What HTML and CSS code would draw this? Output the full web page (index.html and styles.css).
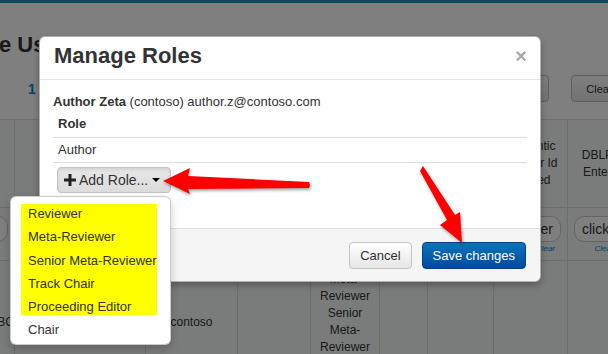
FILE: index.html
```html
<!DOCTYPE html>
<html lang="en">
<head>
    <meta charset="UTF-8">
    <meta name="viewport" content="width=device-width, initial-scale=1.0">
    <title>Manage Users</title>
    <link rel="stylesheet" href="styles.css">
</head>
<body>
    <div class="topbar"></div>
    <div class="page">
        <h1 class="page-title">e Users</h1>
        <div class="toolbar">
            <a class="count" href="#">1</a>
            <div class="toolbar-buttons">
                <button class="btn-page">Export Users</button>
                <button class="btn-page">Clear Filters</button>
            </div>
        </div>
        <table class="users">
            <colgroup>
                <col style="width: 80px">
                <col style="width: 131px">
                <col style="width: 92px">
                <col style="width: 73px">
                <col style="width: 69px">
                <col style="width: 48px">
                <col style="width: 66px">
                <col style="width: 74px">
                <col style="width: 73px">
                <col style="width: 60px">
            </colgroup>
            <tr class="head">
                <th class="no-line"></th>
                <th>Name</th>
                <th>Organization</th>
                <th>Email</th>
                <th>Roles</th>
                <th>Id</th>
                <th>Verified</th>
                <th>Semantic Scholar Id Verified</th>
                <th>DBLP Id Entered</th>
                <th>ORCID</th>
            </tr>
            <tr class="filters">
                <td class="filter-right"><div class="pill">filter</div></td>
                <td><div class="pill">click to filter</div></td>
                <td><div class="pill">click to filter</div></td>
                <td><div class="pill">click</div></td>
                <td><div class="pill">click</div></td>
                <td></td>
                <td></td>
                <td class="filter-right"><div class="pill">owner</div><a class="clear clear-right" href="#">Clear</a></td>
                <td><div class="pill">click here</div><a class="clear" href="#">Clear</a></td>
                <td></td>
            </tr>
            <tr class="data">
                <td class="cell-right">ABC</td>
                <td>Author Zeta</td>
                <td>contoso</td>
                <td></td>
                <td>Meta-<br>Reviewer<br>Senior<br>Meta-<br>Reviewer<br>Chair</td>
                <td></td>
                <td></td>
                <td></td>
                <td></td>
                <td></td>
            </tr>
        </table>
    </div>

    <div class="backdrop"></div>

    <div class="modal">
        <div class="modal-header">
            <button class="close" type="button">&times;</button>
            <h3>Manage Roles</h3>
        </div>
        <div class="modal-body">
            <p class="user-line"><strong>Author Zeta</strong> (contoso) author.z@contoso.com</p>
            <table class="roles">
                <tr><th>Role</th></tr>
                <tr><td>Author</td></tr>
            </table>
            <button class="btn-add" type="button">
                <svg class="plus" width="12" height="12" viewBox="0 0 12 12"><path d="M4.5 0h3v4.5H12v3H7.5V12h-3V7.5H0v-3h4.5z"/></svg>
                Add Role...<span class="caret"></span>
            </button>
        </div>
        <div class="modal-footer">
            <button class="btn" type="button">Cancel</button>
            <button class="btn btn-primary" type="button">Save changes</button>
        </div>
    </div>

    <div class="role-menu">
        <div class="highlight"></div>
        <a href="#">Reviewer</a>
        <a href="#">Meta-Reviewer</a>
        <a href="#">Senior Meta-Reviewer</a>
        <a href="#">Track Chair</a>
        <a href="#">Proceeding Editor</a>
        <a href="#">Chair</a>
    </div>

    <svg class="arrows" width="608" height="354" viewBox="0 0 608 354">
        <polygon points="163,181 190,168 188,176 309,182 310,185 309,188 188,189 190,194"/>
        <polygon points="420,171 423,166 455,215 460,212 462,243 440,225 447,220"/>
    </svg>
</body>
</html>
```

FILE: styles.css
```css
body {
    font-family: "Liberation Sans", Arial, sans-serif;
    color: #333;
    background-color: #fff;
    margin: 0;
    padding: 0;
    width: 608px;
    height: 354px;
    overflow: hidden;
    position: relative;
}
.topbar {
    height: 3px;
    background-color: #1a94b4;
}
.page {
    width: 700px;
}
.page-title {
    font-size: 22px;
    line-height: 26px;
    margin: 29px 0 0 -1px;
    color: #333;
}
.toolbar {
    display: flex;
    align-items: center;
    margin-top: 17px;
    height: 27px;
}
.count {
    color: #0a84c8;
    font-size: 14px;
    font-weight: bold;
    text-decoration: none;
    margin-left: 28px;
}
.toolbar-buttons {
    margin-left: auto;
    margin-right: 39px;
    display: flex;
    gap: 22px;
}
.btn-page {
    height: 27px;
    width: 90px;
    font-family: inherit;
    font-size: 11px;
    color: #333;
    background: linear-gradient(#fff, #e6e6e6);
    border: 1px solid #bbb;
    border-radius: 4px;
}
.users {
    margin-top: 17px;
    margin-left: -66px;
    border-collapse: collapse;
    table-layout: fixed;
    width: 766px;
    background-color: #f4f8f8;
    font-size: 12px;
    border-top: 1px solid #ddd;
}
.users th,
.users td {
    border: 1px solid #d8dcdc;
    text-align: center;
    padding: 4px;
    font-weight: normal;
    line-height: 17px;
}
.users .no-line {
    border-right: none;
}
.head th {
    height: 79px;
}
.filters td {
    height: 44px;
    vertical-align: top;
    padding: 8px 6px 0;
}
.pill {
    border: 1px solid #c8c8c8;
    background-color: #fff;
    border-radius: 10px;
    height: 24px;
    line-height: 24px;
    font-size: 14px;
    overflow: hidden;
    white-space: nowrap;
    text-align: left;
    padding: 0 7px;
}
.filter-right .pill {
    text-align: right;
}
.clear {
    display: block;
    font-size: 8px;
    line-height: 10px;
    margin-top: 2px;
    color: #0a84c8;
    font-style: italic;
    text-decoration: none;
}
.clear-right {
    text-align: right;
    padding-right: 6px;
}
.data td {
    height: 114px;
    vertical-align: middle;
}
.users .cell-right {
    text-align: right;
    padding-right: 0;
}
.backdrop {
    position: absolute;
    top: 0;
    left: 0;
    right: 0;
    bottom: 0;
    background-color: rgba(0, 0, 0, 0.5);
}

/* modal */
.modal {
    position: absolute;
    top: 36px;
    left: 39px;
    width: 502px;
    box-sizing: border-box;
    background: #fff;
    border: 1px solid rgba(0, 0, 0, 0.3);
    border-radius: 6px;
    box-shadow: 0 3px 7px rgba(0, 0, 0, 0.3);
    font-size: 13px;
}
.modal-header {
    padding: 6px 14px 0;
    height: 36px;
    border-bottom: 1px solid #e5e5e5;
}
.modal-header h3 {
    margin: 0;
    font-size: 22px;
    line-height: 26px;
    color: #333;
}
.close {
    float: right;
    margin-top: 3px;
    margin-right: -1px;
    padding: 0;
    border: none;
    background: none;
    font-family: inherit;
    font-size: 20px;
    font-weight: bold;
    line-height: 20px;
    color: #000;
    opacity: 0.35;
}
.modal-body {
    padding: 13px 13px 35px 13px;
}
.user-line {
    margin: 0;
    line-height: 18px;
}
.roles {
    width: 100%;
    border-collapse: collapse;
}
.roles th,
.roles td {
    text-align: left;
    padding: 4px 5px;
    border-bottom: 1px solid #ddd;
}
.roles th {
    line-height: 18px;
}
.roles td {
    padding: 3px 5px 4px;
    line-height: 17px;
}
.btn-add {
    margin: 4px 0 0 4px;
    width: 114px;
    height: 26px;
    display: flex;
    align-items: center;
    gap: 3px;
    padding: 0 0 0 6px;
    font-family: inherit;
    font-size: 14px;
    color: #333;
    background: linear-gradient(#e6e6e6, #dcdcdc);
    border: 1px solid #c4c4c4;
    border-radius: 4px;
    box-shadow: inset 0 2px 3px rgba(0, 0, 0, 0.08);
}
.plus {
    fill: #222;
}
.caret {
    width: 0;
    height: 0;
    margin-left: 1px;
    border-left: 4px solid transparent;
    border-right: 4px solid transparent;
    border-top: 4px solid #000;
}
.modal-footer {
    background-color: #f5f5f5;
    border-top: 1px solid #ddd;
    border-radius: 0 0 6px 6px;
    padding: 13px 14px 12px;
    display: flex;
    justify-content: flex-end;
    gap: 10px;
}
.btn {
    height: 27px;
    padding: 0 10px;
    font-family: inherit;
    font-size: 13px;
    color: #333;
    background: linear-gradient(#fff, #e6e6e6);
    border: 1px solid #c5c5c5;
    border-radius: 4px;
}
.btn-primary {
    color: #fff;
    background: linear-gradient(#0b74ba, #0049a0);
    border-color: #00428d;
}

/* role dropdown */
.role-menu {
    position: absolute;
    top: 196px;
    left: 10px;
    width: 161px;
    height: 149px;
    box-sizing: border-box;
    padding-top: 5px;
    background: #fff;
    border: 1px solid rgba(0, 0, 0, 0.2);
    border-radius: 6px;
    box-shadow: 0 4px 10px rgba(0, 0, 0, 0.2);
    font-size: 13px;
}
.highlight {
    position: absolute;
    top: 7px;
    left: 10px;
    width: 136px;
    height: 111px;
    background-color: #ffff00;
}
.role-menu a {
    position: relative;
    display: block;
    line-height: 23.3px;
    padding-left: 17px;
    color: #333;
    text-decoration: none;
}
.arrows {
    position: absolute;
    top: 0;
    left: 0;
    fill: #ff0000;
    filter: drop-shadow(1px 2px 1.5px rgba(0, 0, 0, 0.35));
}
```
